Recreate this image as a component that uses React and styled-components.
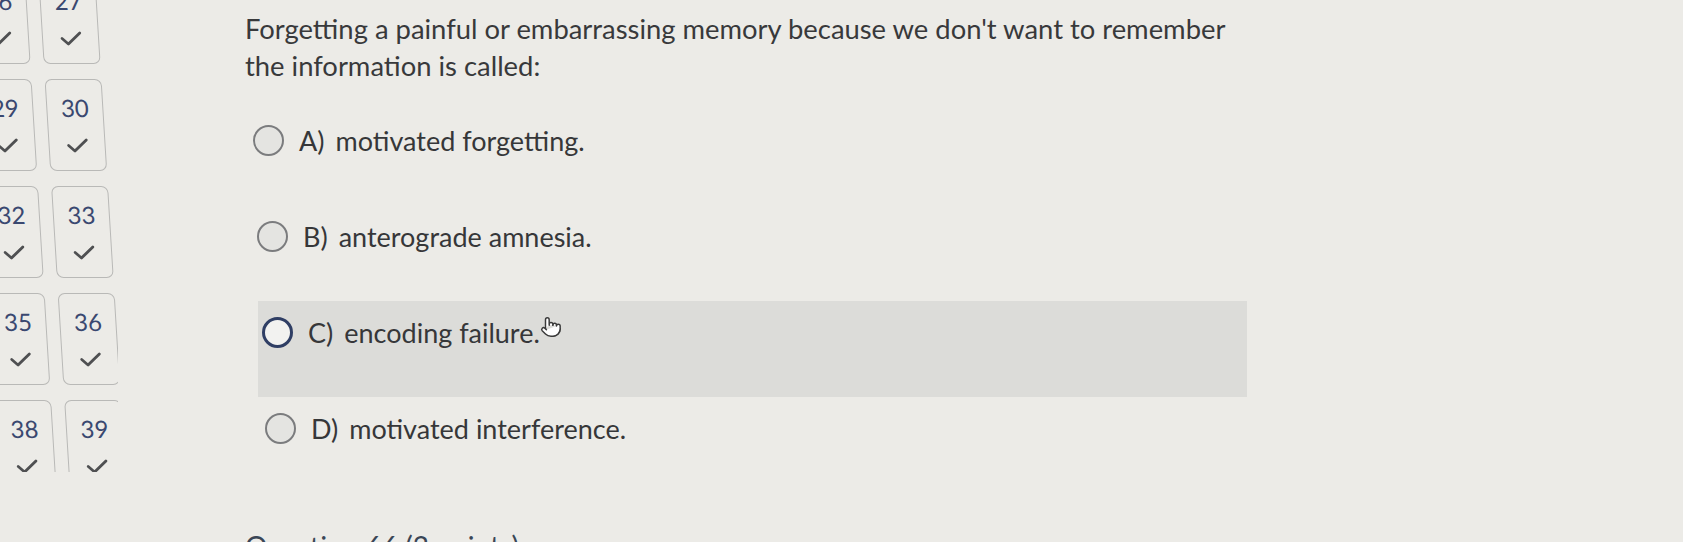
import React from "react";
import styled, { createGlobalStyle } from "styled-components";
import { Pointer } from "lucide-react";

const GlobalStyle = createGlobalStyle`
    html, body {
        margin: 0;
        padding: 0;
        background: #ecebe7;
    }
    body {
        font-family: Lato, "Open Sans", sans-serif;
        color: #3a3b3d;
    }
`

const Page = styled.div`
    display: flex;
    width: 1683px;
    height: 542px;
    overflow: hidden;
`

// the question list is scrolled, so its first column and row are cut
const Sidebar = styled.nav`
    flex: 0 0 auto;
    width: 150px;
    height: 472px;
    margin-left: -32px;
    overflow: hidden;
`

// the photo is taken at an angle: the tiles lean to the right
const TileGrid = styled.ul`
    display: grid;
    grid-template-columns: 57px 57px;
    grid-auto-rows: 92px;
    column-gap: 13px;
    row-gap: 15px;
    list-style: none;
    margin: -28px 0 0 0;
    padding: 0;
    transform: skewX(3.5deg);
    transform-origin: 0 0;
`

const Tile = styled.li`
    display: flex;
    flex-direction: column;
    align-items: center;
    box-sizing: border-box;
    border: 1.5px solid #b9b9b7;
    border-radius: 7px;
    padding-top: 13px;
`

const TileNumber = styled.span`
    font-size: 24px;
    line-height: 30px;
    height: 30px;
    color: #3a4870;
`

const TileCheck = styled.svg`
    margin-top: 15px;
    width: 22px;
    height: 15px;
    fill: none;
    stroke: #4f5052;
    stroke-width: 2.8;
    stroke-linecap: round;
    stroke-linejoin: round;
`

const Main = styled.main`
    flex: 0 0 auto;
    width: 1000px;
    margin-left: 127px;
    padding-top: 10px;
`

const Question = styled.p`
    margin: 0;
    font-size: 27.4px;
    line-height: 37px;
    width: 1000px;
    color: #38393b;
`

const Answers = styled.ul`
    list-style: none;
    margin: 25px 0 0 13px;
    padding: 0;
    width: 989px;
`

const Answer = styled.li`
    position: relative;
    display: flex;
    align-items: flex-start;
    gap: 15px;
    height: 96px;
    box-sizing: border-box;
    padding: 16px 0 0 4px;
    background: ${p => (p.$hover ? "#dcdcd9" : "transparent")};
`

const Radio = styled.span`
    flex: 0 0 auto;
    box-sizing: border-box;
    width: 31px;
    height: 31px;
    margin-left: ${p => p.$shift}px;
    border-radius: 50%;
    border: ${p => (p.$hover ? "3px solid #2f3e64" : "2px solid #7b7c7e")};
    background: ${p => (p.$hover ? "#f2f2f0" : "#e4e4e1")};
`

const Label = styled.span`
    font-size: 27px;
    line-height: 31px;
    color: #363739;
`

const Letter = styled.span`
    margin-right: 11px;
`

const Cursor = styled.span`
    position: absolute;
    top: 15px;
    left: 282px;
    display: flex;
    color: #3a3a3a;
`

const NextHeading = styled.h2`
    margin: 36px 0 0 0;
    font-size: 28px;
    font-weight: 400;
    color: #3a4656;
`

const tiles = [26, 27, 29, 30, 32, 33, 35, 36, 38, 39];

const answers = [
    { letter: "A)", text: "motivated forgetting.", shift: -9 },
    { letter: "B)", text: "anterograde amnesia.", shift: -5 },
    { letter: "C)", text: "encoding failure.", shift: 0, hover: true },
    { letter: "D)", text: "motivated interference.", shift: 3 },
];

function App() {
    return (
        <Page>
            <GlobalStyle />
            <Sidebar>
                <TileGrid>
                    {tiles.map(n => (
                        <Tile key={n}>
                            <TileNumber>{n}</TileNumber>
                            <TileCheck viewBox="0 0 22 15">
                                <polyline points="2,7.5 8,13 20,2" />
                            </TileCheck>
                        </Tile>
                    ))}
                </TileGrid>
            </Sidebar>
            <Main>
                <Question>
                    Forgetting a painful or embarrassing memory because we don't want to remember
                    the information is called:
                </Question>
                <Answers>
                    {answers.map(a => (
                        <Answer key={a.letter} $hover={a.hover}>
                            <Radio $hover={a.hover} $shift={a.shift} />
                            <Label><Letter>{a.letter}</Letter>{a.text}</Label>
                            {a.hover && (
                                <Cursor>
                                    <Pointer size={22} strokeWidth={1.6} fill="#ffffff" />
                                </Cursor>
                            )}
                        </Answer>
                    ))}
                </Answers>
                <NextHeading>Question 66 (2 points)</NextHeading>
            </Main>
        </Page>
    );
}

export default App;
